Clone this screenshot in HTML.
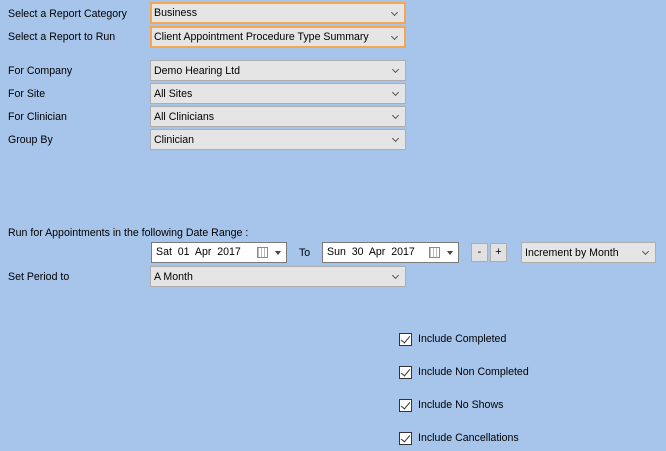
<!DOCTYPE html>
<html><head><style>
body{margin:0;width:666px;height:451px;background:#a7c5eb;font-family:"Liberation Sans",sans-serif;font-size:10.6px;color:#000;position:relative;overflow:hidden}
.a{position:absolute;white-space:nowrap}
.cb{position:absolute;background:#e5e5e5;border:1px solid #adadad;box-sizing:border-box;padding-left:3px;line-height:20px;white-space:nowrap}
.cb.o{border:2px solid #f6a64e;line-height:19px;padding-left:2px}
.cb:after{content:"";position:absolute;right:7px;top:6px;width:4px;height:4px;border-right:1px solid #555;border-bottom:1px solid #555;transform:rotate(45deg)}
.dp{position:absolute;background:#fff;border:1px solid #7a7a7a;box-sizing:border-box;padding-left:4px;line-height:19px;white-space:nowrap}
.cal{position:absolute;right:18px;top:4px;width:9px;height:9px;border:1px solid #8a8a8a;background:repeating-linear-gradient(90deg,#bbb 0 1px,#fff 1px 3px)}
.dar{position:absolute;right:5px;top:8px;border-left:3px solid transparent;border-right:3px solid transparent;border-top:4px solid #444}
.bt{position:absolute;background:#e1e1e1;border:1px solid #adadad;box-sizing:border-box;text-align:center;line-height:17px;font-size:11px}
.ck{position:absolute;width:13px;height:13px;border:1px solid #333;background:#fff;box-sizing:border-box}
.ck:after{content:"";position:absolute;left:3px;top:0px;width:4px;height:8px;border-right:1.3px solid #333;border-bottom:1.3px solid #333;transform:rotate(40deg)}
</style></head><body>
<div class="a" style="left:8px;top:8px">Select a Report Category</div>
<div class="a" style="left:8px;top:31px">Select a Report to Run</div>
<div class="a" style="left:8px;top:65px">For Company</div>
<div class="a" style="left:8px;top:88px">For Site</div>
<div class="a" style="left:8px;top:111px">For Clinician</div>
<div class="a" style="left:8px;top:134px">Group By</div>
<div class="cb o" style="left:150px;top:2px;width:256px;height:22px">Business</div>
<div class="cb o" style="left:150px;top:26px;width:256px;height:22px">Client Appointment Procedure Type Summary</div>
<div class="cb" style="left:150px;top:60px;width:256px;height:21px">Demo Hearing Ltd</div>
<div class="cb" style="left:150px;top:83px;width:256px;height:21px">All Sites</div>
<div class="cb" style="left:150px;top:106px;width:256px;height:21px">All Clinicians</div>
<div class="cb" style="left:150px;top:129px;width:256px;height:21px">Clinician</div>
<div class="a" style="left:8px;top:227px">Run for Appointments in the following Date Range :</div>
<div class="dp" style="left:151px;top:242px;width:136px;height:21px">Sat&nbsp; 01&nbsp; Apr&nbsp; 2017<span class="cal"></span><span class="dar"></span></div>
<div class="a" style="left:299px;top:247px">To</div>
<div class="dp" style="left:322px;top:242px;width:137px;height:21px">Sun&nbsp; 30&nbsp; Apr&nbsp; 2017<span class="cal"></span><span class="dar"></span></div>
<div class="bt" style="left:471px;top:243px;width:17px;height:19px">-</div>
<div class="bt" style="left:490px;top:243px;width:17px;height:19px">+</div>
<div class="cb" style="left:521px;top:242px;width:135px;height:21px">Increment by Month</div>
<div class="a" style="left:8px;top:271px">Set Period to</div>
<div class="cb" style="left:150px;top:266px;width:256px;height:21px">A Month</div>
<div class="ck" style="left:399px;top:333px"></div><div class="a" style="left:418px;top:333px">Include Completed</div>
<div class="ck" style="left:399px;top:366px"></div><div class="a" style="left:418px;top:366px">Include Non Completed</div>
<div class="ck" style="left:399px;top:399px"></div><div class="a" style="left:418px;top:399px">Include No Shows</div>
<div class="ck" style="left:399px;top:432px"></div><div class="a" style="left:418px;top:432px">Include Cancellations</div>
</body></html>
